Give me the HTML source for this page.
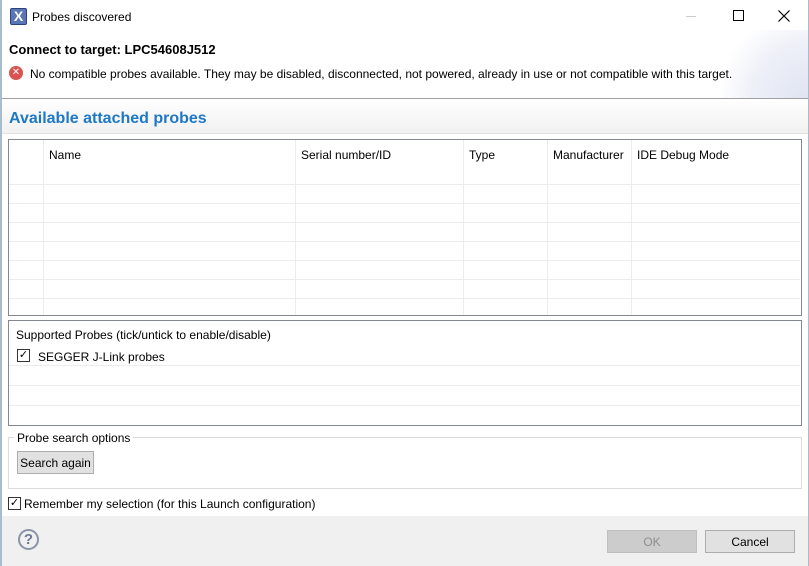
<!DOCTYPE html>
<html><head><style>
*{margin:0;padding:0;box-sizing:border-box}
body{width:809px;height:566px;overflow:hidden;background:#fff;font-family:"Liberation Sans","DejaVu Sans",sans-serif;font-size:12px;color:#000;position:relative}
.a{position:absolute}
.hl{position:absolute;height:1px;background:#ececec}
.vl{position:absolute;width:1px;background:#ececec}
</style></head><body>
<div class="a" style="left:0;top:0;width:2px;height:566px;background:#a9bccb"></div>
<div class="a" style="right:0;top:0;width:1px;height:566px;background:#a9bccb"></div>
<!-- title -->
<div class="a" style="left:10px;top:8px;width:17px;height:17px;background:#5a76b4;border:1px solid #2c4278;border-radius:2px;color:#fff;font-weight:bold;font-size:14px;line-height:15px;text-align:center">X</div>
<div class="a" style="left:32px;top:10px;font-size:12px">Probes discovered</div>
<div class="a" style="left:686px;top:16px;width:10px;height:1px;background:#ccc"></div>
<div class="a" style="left:733px;top:10px;width:11px;height:11px;border:1px solid #000"></div>
<svg class="a" style="left:778px;top:10px" width="12" height="12"><path d="M0.5 0.5L11.5 11.5M11.5 0.5L0.5 11.5" stroke="#000" stroke-width="1.2"/></svg>
<!-- header -->
<div class="a" style="left:720px;top:30px;width:88px;height:70px;background:radial-gradient(circle at 100% 100%,#dfe4f2 0,#eef0f8 50%,#fff 80%)"></div>
<div class="a" style="left:9px;top:42px;font-weight:bold;font-size:13px">Connect to target: LPC54608J512</div>
<div class="a" style="left:9px;top:66px;width:14px;height:14px;border-radius:50%;background:#d9534f;color:#fff;font-size:10px;line-height:14px;text-align:center">✕</div>
<div class="a" style="left:30px;top:67px">No compatible probes available. They may be disabled, disconnected, not powered, already in use or not compatible with this target.</div>
<div class="a" style="left:2px;top:98px;width:806px;height:1px;background:#a0a0a0"></div>
<div class="a" style="left:2px;top:99px;width:806px;height:34px;background:linear-gradient(#fff,#f1f1f1)"></div>
<div class="a" style="left:9px;top:110px;font-weight:bold;font-size:16px;color:#1f78c4">Available attached probes</div>
<div class="a" style="left:2px;top:133px;width:806px;height:1px;background:#e2e2e2"></div>
<!-- table -->
<div class="a" style="left:8px;top:139px;width:794px;height:177px;border:1px solid #828790;background:#fff"></div>
<div class="vl" style="left:43px;top:140px;height:175px"></div>
<div class="vl" style="left:295px;top:140px;height:175px"></div>
<div class="vl" style="left:463px;top:140px;height:175px"></div>
<div class="vl" style="left:547px;top:140px;height:175px"></div>
<div class="vl" style="left:631px;top:140px;height:175px"></div>
<div class="hl" style="left:9px;top:184px;width:791px"></div>
<div class="hl" style="left:9px;top:203px;width:791px"></div>
<div class="hl" style="left:9px;top:222px;width:791px"></div>
<div class="hl" style="left:9px;top:241px;width:791px"></div>
<div class="hl" style="left:9px;top:260px;width:791px"></div>
<div class="hl" style="left:9px;top:279px;width:791px"></div>
<div class="hl" style="left:9px;top:298px;width:791px"></div>
<div class="a" style="left:49px;top:148px">Name</div>
<div class="a" style="left:301px;top:148px">Serial number/ID</div>
<div class="a" style="left:469px;top:148px">Type</div>
<div class="a" style="left:553px;top:148px">Manufacturer</div>
<div class="a" style="left:637px;top:148px">IDE Debug Mode</div>
<!-- supported -->
<div class="a" style="left:8px;top:320px;width:794px;height:106px;border:1px solid #828790;background:#fff"></div>
<div class="hl" style="left:9px;top:365px;width:791px"></div>
<div class="hl" style="left:9px;top:385px;width:791px"></div>
<div class="hl" style="left:9px;top:405px;width:791px"></div>
<div class="a" style="left:16px;top:328px">Supported Probes (tick/untick to enable/disable)</div>
<div class="a" style="left:17px;top:349px;width:13px;height:13px;border:1px solid #333;font-size:11px;line-height:11px;text-align:center">✓</div>
<div class="a" style="left:38px;top:350px">SEGGER J-Link probes</div>
<!-- group -->
<div class="a" style="left:8px;top:437px;width:794px;height:52px;border:1px solid #dcdcdc"></div>
<div class="a" style="left:14px;top:431px;background:#fff;padding:0 3px">Probe search options</div>
<div class="a" style="left:17px;top:451px;width:77px;height:23px;border:1px solid #adadad;background:#e1e1e1;text-align:center;line-height:22px">Search again</div>
<div class="a" style="left:8px;top:497px;width:13px;height:13px;border:1px solid #333;font-size:11px;line-height:11px;text-align:center">✓</div>
<div class="a" style="left:24px;top:497px">Remember my selection (for this Launch configuration)</div>
<!-- footer -->
<div class="a" style="left:2px;top:516px;width:806px;height:50px;background:#f0f0f0"></div>
<div class="a" style="left:18px;top:529px;width:21px;height:21px;border:2px solid #8a93a8;border-radius:50%;color:#6d7790;font-weight:bold;font-size:15px;line-height:17px;text-align:center">?</div>
<div class="a" style="left:607px;top:530px;width:90px;height:23px;border:1px solid #bfbfbf;background:#cccccc;color:#8d8d8d;text-align:center;line-height:22px">OK</div>
<div class="a" style="left:705px;top:530px;width:90px;height:23px;border:1px solid #adadad;background:#e1e1e1;text-align:center;line-height:22px">Cancel</div>
</body></html>
